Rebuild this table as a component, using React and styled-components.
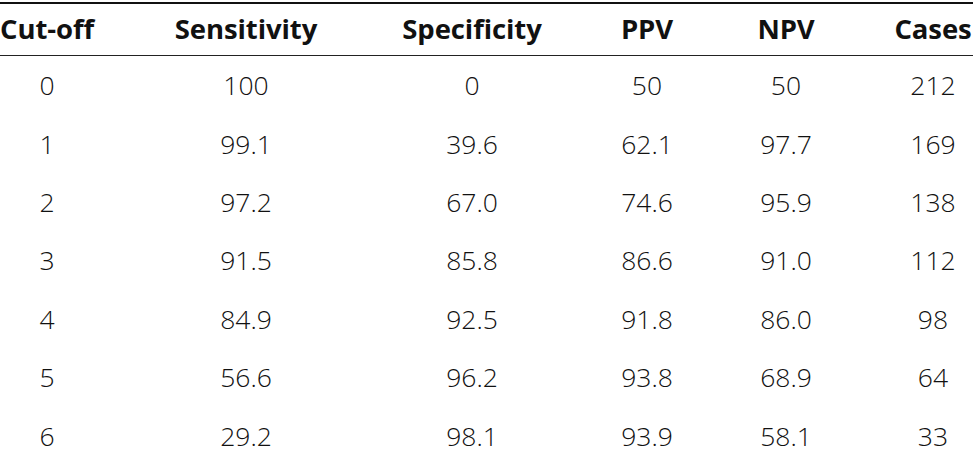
import styled, { createGlobalStyle } from "styled-components";

const GlobalStyle = createGlobalStyle`
  html, body {
    margin: 0;
    padding: 0;
    background: #fff;
  }
  body {
    font-family: "Open Sans", "Liberation Sans", sans-serif;
    color: #111;
  }
`;

const TableWrap = styled.div`
  width: 973px;
  padding-top: 2px;
  overflow: hidden;
`;

const Table = styled.div`
  border-top: 2px solid #111;
`;

const Row = styled.div`
  display: grid;
  grid-template-columns: 94px 304px 148px 202px 76px 218px;
  width: 1042px;
  height: ${(p) => (p.$head ? "51px" : "58.4px")};
  align-items: center;
  justify-items: center;
  border-bottom: ${(p) => (p.$head ? "1px solid #222" : "none")};
`;

const HeadCell = styled.div`
  font-size: 27.5px;
  font-weight: 700;
  letter-spacing: -0.1px;
  white-space: nowrap;
  margin-top: -2px;
`;

const Cell = styled.div`
  font-size: 26.5px;
  font-weight: 300;
  white-space: nowrap;
`;

const headers = ["Cut-off", "Sensitivity", "Specificity", "PPV", "NPV", "Cases"];

const rows = [
  ["0", "100", "0", "50", "50", "212"],
  ["1", "99.1", "39.6", "62.1", "97.7", "169"],
  ["2", "97.2", "67.0", "74.6", "95.9", "138"],
  ["3", "91.5", "85.8", "86.6", "91.0", "112"],
  ["4", "84.9", "92.5", "91.8", "86.0", "98"],
  ["5", "56.6", "96.2", "93.8", "68.9", "64"],
  ["6", "29.2", "98.1", "93.9", "58.1", "33"],
];

function App() {
  return (
    <>
      <GlobalStyle />
      <TableWrap>
        <Table>
          <Row $head>
            {headers.map((h) => (
              <HeadCell key={h}>{h}</HeadCell>
            ))}
          </Row>
          {rows.map((r) => (
            <Row key={r[0]}>
              {r.map((v, i) => (
                <Cell key={i}>{v}</Cell>
              ))}
            </Row>
          ))}
        </Table>
      </TableWrap>
    </>
  );
}

export default App;
